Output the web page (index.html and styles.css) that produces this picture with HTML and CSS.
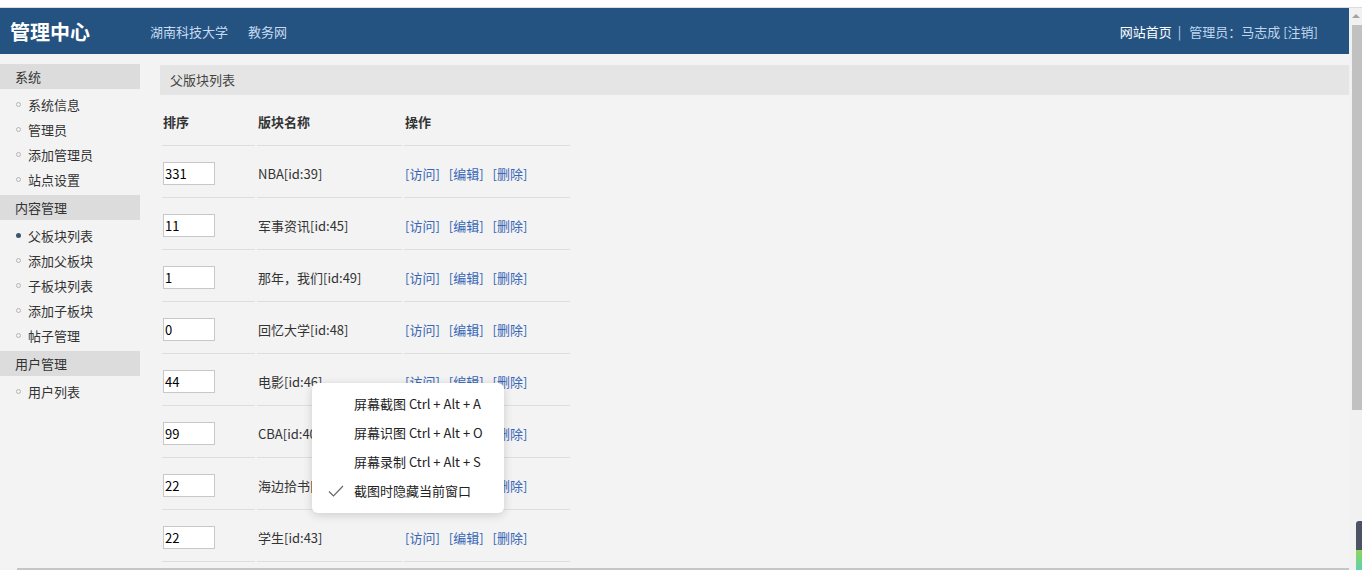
FILE: index.html
```html
<!DOCTYPE html>
<html lang="zh-CN">
    <head>
        <title>管理中心</title>
        <meta charset="utf-8">
        <meta name="viewport" content="width=device-width, initial-scale=1.0">
        <link rel="stylesheet" href="styles.css">
    </head>
    <body>
        <div class="topline"></div>
        <div class="frame">
            <div class="page">
                <header class="header">
                    <div class="logo">管理中心</div>
                    <nav class="nav">
                        <a href="#">湖南科技大学</a>
                        <a href="#">教务网</a>
                    </nav>
                    <div class="login">
                        <a class="home" href="#">网站首页</a><span class="sep">|</span>管理员：马志成 <a href="#">[注销]</a>
                    </div>
                </header>

                <div class="layout">
                    <aside class="sidebar">
                        <h3>系统</h3>
                        <ul>
                            <li>系统信息</li>
                            <li>管理员</li>
                            <li>添加管理员</li>
                            <li>站点设置</li>
                        </ul>
                        <h3>内容管理</h3>
                        <ul>
                            <li class="current">父板块列表</li>
                            <li>添加父板块</li>
                            <li>子板块列表</li>
                            <li>添加子板块</li>
                            <li>帖子管理</li>
                        </ul>
                        <h3>用户管理</h3>
                        <ul>
                            <li>用户列表</li>
                        </ul>
                    </aside>

                    <main class="main">
                        <div class="title">父版块列表</div>
                        <table class="list">
                            <tr>
                                <th class="c1">排序</th>
                                <th class="c2">版块名称</th>
                                <th class="c3">操作</th>
                            </tr>
                            <tr>
                                <td><input type="text" value="331"></td>
                                <td>NBA[id:39]</td>
                                <td><a href="#">[访问]</a><a href="#">[编辑]</a><a href="#">[删除]</a></td>
                            </tr>
                            <tr>
                                <td><input type="text" value="11"></td>
                                <td>军事资讯[id:45]</td>
                                <td><a href="#">[访问]</a><a href="#">[编辑]</a><a href="#">[删除]</a></td>
                            </tr>
                            <tr>
                                <td><input type="text" value="1"></td>
                                <td>那年，我们[id:49]</td>
                                <td><a href="#">[访问]</a><a href="#">[编辑]</a><a href="#">[删除]</a></td>
                            </tr>
                            <tr>
                                <td><input type="text" value="0"></td>
                                <td>回忆大学[id:48]</td>
                                <td><a href="#">[访问]</a><a href="#">[编辑]</a><a href="#">[删除]</a></td>
                            </tr>
                            <tr>
                                <td><input type="text" value="44"></td>
                                <td>电影[id:46]</td>
                                <td><a href="#">[访问]</a><a href="#">[编辑]</a><a href="#">[删除]</a></td>
                            </tr>
                            <tr>
                                <td><input type="text" value="99"></td>
                                <td>CBA[id:40]</td>
                                <td><a href="#">[访问]</a><a href="#">[编辑]</a><a href="#">[删除]</a></td>
                            </tr>
                            <tr>
                                <td><input type="text" value="22"></td>
                                <td>海边拾书[id:47]</td>
                                <td><a href="#">[访问]</a><a href="#">[编辑]</a><a href="#">[删除]</a></td>
                            </tr>
                            <tr>
                                <td><input type="text" value="22"></td>
                                <td>学生[id:43]</td>
                                <td><a href="#">[访问]</a><a href="#">[编辑]</a><a href="#">[删除]</a></td>
                            </tr>
                        </table>
                    </main>
                </div>
                <div class="hscroll"></div>
            </div>
            <div class="vscroll">
                <div class="arrow"></div>
                <div class="thumb"></div>
            </div>
        </div>

        <!-- screenshot tool popup -->
        <ul class="popup">
            <li>屏幕截图 Ctrl + Alt + A</li>
            <li>屏幕识图 Ctrl + Alt + O</li>
            <li>屏幕录制 Ctrl + Alt + S</li>
            <li class="checked">
                <svg width="16" height="12" viewBox="0 0 16 12"><path d="M1 6.5 L5.5 11 L15 1" fill="none" stroke="#666" stroke-width="1.2"/></svg>
                截图时隐藏当前窗口
            </li>
        </ul>
        <div class="widget"></div>
    </body>
</html>
```

FILE: styles.css
```css
body {
    margin: 0;
    height: 570px;
    overflow: hidden;
    font-family: "Noto Sans CJK SC", "Liberation Sans", sans-serif;
    font-size: 13px;
    color: #333;
    background: #fff;
    position: relative;
}
a {
    text-decoration: none;
}
.topline {
    height: 7px;
    background: #fff;
    border-bottom: 1px solid #dcdcdc;
}
.frame {
    display: flex;
    height: 562px;
}
.page {
    flex: 1;
    display: flex;
    flex-direction: column;
    background: #f3f3f3;
    overflow: hidden;
}

/* header bar */
.header {
    height: 46px;
    flex-shrink: 0;
    display: flex;
    align-items: center;
    background: #255381;
    color: #bfd6ee;
}
.logo {
    width: 140px;
    padding-left: 10px;
    box-sizing: border-box;
    font-size: 20px;
    font-weight: bold;
    color: #fff;
}
.nav {
    display: flex;
    gap: 20px;
    padding-left: 10px;
}
.nav a {
    color: #c6dbf1;
}
.login {
    margin-left: auto;
    padding-right: 31px;
}
.login a {
    color: #bfd6ee;
}
.login .home {
    color: #fff;
}
.login .sep {
    margin: 0 8px 0 6px;
}

.layout {
    flex: 1;
    display: flex;
    padding-top: 10px;
    overflow: hidden;
}

/* left menu */
.sidebar {
    width: 140px;
    flex-shrink: 0;
}
.sidebar h3 {
    margin: 0;
    height: 25px;
    line-height: 25px;
    padding-left: 15px;
    font-size: 13px;
    font-weight: normal;
    background: #dcdcdc;
    color: #333;
}
.sidebar ul {
    list-style: none;
    margin: 0;
    padding: 3px 0;
}
.sidebar li {
    height: 25px;
    display: flex;
    align-items: center;
    padding-left: 16px;
    gap: 7px;
    color: #333;
}
.sidebar li::before {
    content: "";
    width: 3px;
    height: 3px;
    border: 1px solid #b5b5b5;
    border-radius: 50%;
}
.sidebar li.current::before {
    width: 5px;
    height: 5px;
    border: 0;
    background: #3a5673;
}

/* content */
.main {
    flex: 1;
    margin-left: 20px;
    padding-top: 1px;
}
.title {
    height: 30px;
    line-height: 30px;
    padding-left: 10px;
    background: #e5e5e5;
    color: #444;
}
.list {
    margin-top: 2px;
    border-spacing: 2px;
    border-collapse: separate;
}
.list th,
.list td {
    padding: 0 0 0 1px;
    text-align: left;
    border-bottom: 1px solid #dedede;
    color: #333;
}
.list th {
    height: 45px;
    padding-bottom: 1px;
    font-weight: bold;
}
.list td {
    height: 47px;
    padding-top: 2px;
}
.list .c1 { width: 92px; }
.list .c2 { width: 144px; }
.list .c3 { width: 165px; }
.list input {
    width: 52px;
    height: 23px;
    box-sizing: border-box;
    margin: 0;
    padding: 0 0 0 1px;
    border: 1px solid #c8c8c8;
    background: #fff;
    font-family: "Noto Sans CJK SC", "Liberation Sans", sans-serif;
    font-size: 13px;
    color: #000;
    vertical-align: middle;
}
.list a {
    color: #3766b5;
    margin-right: 9px;
}

.hscroll {
    height: 2px;
    margin-left: 17px;
    background: #c6c6c6;
    flex-shrink: 0;
}

/* fake scrollbar on the right */
.vscroll {
    width: 13px;
    background: #f1f1f1;
    display: flex;
    flex-direction: column;
    align-items: center;
}
.arrow {
    margin-top: 6px;
    width: 0;
    height: 0;
    border-left: 4px solid transparent;
    border-right: 4px solid transparent;
    border-bottom: 4px solid #a3a3a3;
}
.thumb {
    margin-top: 7px;
    margin-left: 2px;
    width: 10px;
    height: 385px;
    background: #c1c1c1;
}

/* popup menu over the page */
.popup {
    position: absolute;
    left: 312px;
    top: 383px;
    width: 192px;
    height: 130px;
    box-sizing: border-box;
    margin: 0;
    padding: 6px 0;
    list-style: none;
    background: #fff;
    border-radius: 6px;
    box-shadow: 0 2px 10px rgba(0, 0, 0, 0.16);
    font-family: "Noto Sans CJK SC", "Open Sans", sans-serif;
    color: #222;
}
.popup li {
    height: 29px;
    line-height: 29px;
    padding-left: 42px;
    position: relative;
}
.popup svg {
    position: absolute;
    left: 16px;
    top: 9px;
}

.widget {
    position: absolute;
    right: 0;
    top: 521px;
    width: 6px;
    height: 49px;
    background: linear-gradient(#4b5263 60%, #8fd45a 60%, #5fd0b0);
    border-radius: 3px 0 0 0;
}
```
